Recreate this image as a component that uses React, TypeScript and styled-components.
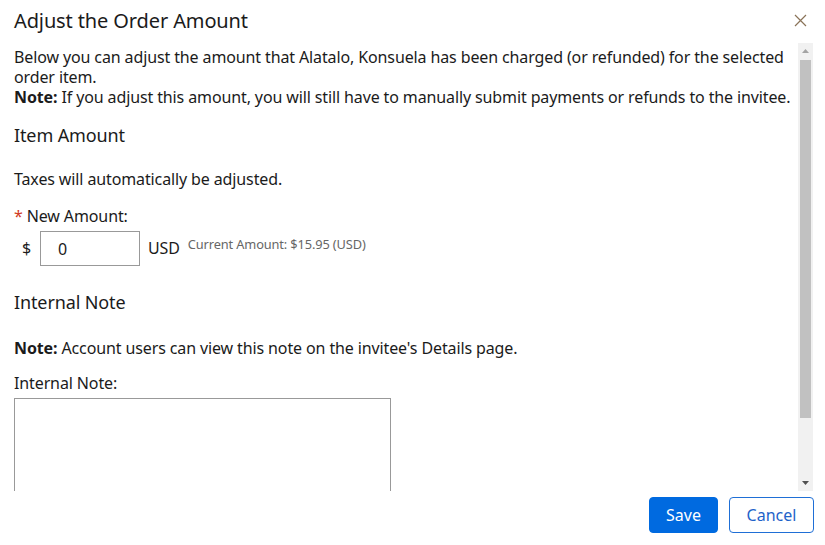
import React, { useState } from "react";
import styled, { createGlobalStyle } from "styled-components";

const GlobalStyle = createGlobalStyle`
  html, body {
    margin: 0;
    padding: 0;
    background: #ffffff;
  }
  body {
    font-family: "Noto Sans", "Liberation Sans", sans-serif;
    color: #1b1b1b;
    letter-spacing: -0.12px;
  }
  * {
    box-sizing: border-box;
  }
`;

const App = () => {
  const [amount, setAmount] = useState("0");
  const [note, setNote] = useState("");

  return (
    <Dialog>
      <GlobalStyle />
      <Header>
        <Title>Adjust the Order Amount</Title>
        <CloseButton aria-label="Close">
          <svg width="13" height="13" viewBox="0 0 13 13">
            <path d="M1 1L12 12M12 1L1 12" stroke="#8a7358" strokeWidth="1.2" fill="none" />
          </svg>
        </CloseButton>
      </Header>
      <Body>
        <Content>
          <Intro>
            Below you can adjust the amount that Alatalo, Konsuela has been charged (or refunded) for the
            selected order item.
            <br />
            <b>Note:</b> If you adjust this amount, you will still have to manually submit payments or
            refunds to the invitee.
          </Intro>
          <SectionTitle>Item Amount</SectionTitle>
          <Text>Taxes will automatically be adjusted.</Text>
          <Label $top={17}>
            <Required>*</Required> New Amount:
          </Label>
          <AmountRow>
            <Currency>$</Currency>
            <AmountInput value={amount} onChange={(e) => setAmount(e.target.value)} />
            <Unit>USD</Unit>
            <Hint>Current Amount: $15.95 (USD)</Hint>
          </AmountRow>
          <SectionTitle $top={24}>Internal Note</SectionTitle>
          <Text $top={24}>
            <b>Note:</b> Account users can view this note on the invitee's Details page.
          </Text>
          <Label>Internal Note:</Label>
          <NoteArea value={note} onChange={(e) => setNote(e.target.value)} />
        </Content>
        <ScrollTrack>
          <ScrollArrow>
            <svg width="7" height="4" viewBox="0 0 7 4">
              <path d="M3.5 0L7 4H0Z" fill="#a3a3a3" />
            </svg>
          </ScrollArrow>
          <ScrollThumb />
          <ScrollArrow $end>
            <svg width="7" height="4" viewBox="0 0 7 4">
              <path d="M0 0H7L3.5 4Z" fill="#505050" />
            </svg>
          </ScrollArrow>
        </ScrollTrack>
      </Body>
      <Footer>
        <PrimaryButton>Save</PrimaryButton>
        <SecondaryButton>Cancel</SecondaryButton>
      </Footer>
    </Dialog>
  );
};

const Dialog = styled.div`
  width: 825px;
  height: 545px;
  display: flex;
  flex-direction: column;
  background: #fff;
  overflow: hidden;
`;

const Header = styled.div`
  height: 43px;
  display: flex;
  align-items: center;
  justify-content: space-between;
  padding: 0 18px 3px 14px;
`;

const Title = styled.h1`
  margin: 0;
  font-size: 20px;
  font-weight: 400;
  color: #1b1b1b;
`;

const CloseButton = styled.button`
  border: none;
  background: none;
  padding: 0;
  display: flex;
  cursor: pointer;
`;

const Body = styled.div`
  height: 448px;
  margin-right: 12px;
  display: flex;
  font-size: 16px;
`;

const Content = styled.div`
  flex: 1;
  min-width: 0;
  overflow: hidden;
  padding: 4px 0 0 14px;
`;

const ScrollTrack = styled.div`
  width: 15px;
  flex-shrink: 0;
  display: flex;
  flex-direction: column;
  background: #f1f1f1;
`;

const ScrollArrow = styled.div<{ $end?: boolean }>`
  height: 16px;
  margin-top: ${(p) => (p.$end ? "auto" : "0")};
  display: flex;
  align-items: center;
  justify-content: center;
`;

const ScrollThumb = styled.div`
  height: 358px;
  margin: 1px 2px 0;
  background: #c1c1c1;
`;

const Intro = styled.p`
  margin: 0;
  line-height: 20px;
  padding-right: 2px;
`;

const SectionTitle = styled.h2<{ $top?: number }>`
  margin: ${(p) => p.$top ?? 16}px 0 0;
  font-size: 18px;
  font-weight: 400;
  line-height: 24px;
`;

const Text = styled.p<{ $top?: number }>`
  margin: ${(p) => p.$top ?? 22}px 0 0;
  line-height: 20px;
`;

const Label = styled.div<{ $top?: number }>`
  margin-top: ${(p) => p.$top ?? 15}px;
  line-height: 20px;
`;

const Required = styled.span`
  color: #d13b24;
`;

const AmountRow = styled.div`
  display: flex;
  align-items: flex-start;
  margin-top: 5px;
`;

const Currency = styled.span`
  width: 26px;
  padding-left: 8px;
  line-height: 35px;
`;

const AmountInput = styled.input`
  width: 100px;
  height: 35px;
  border: 1px solid #999;
  border-radius: 0;
  padding: 0 0 0 17px;
  font: inherit;
  color: #1b1b1b;
  outline: none;
`;

const Unit = styled.span`
  margin-left: 8px;
  line-height: 35px;
`;

const Hint = styled.span`
  margin: 5px 0 0 8px;
  font-size: 12.8px;
  line-height: 16px;
  color: #666;
`;

const NoteArea = styled.textarea`
  display: block;
  margin-top: 5px;
  width: 377px;
  height: 120px;
  border: 1px solid #999;
  border-radius: 0;
  resize: none;
  font: inherit;
  outline: none;
`;

const Footer = styled.div`
  flex: 1;
  display: flex;
  justify-content: flex-end;
  align-items: flex-start;
  gap: 11px;
  padding: 6px 11px 0 0;
`;

const PrimaryButton = styled.button`
  width: 69px;
  height: 36px;
  border: 1px solid #006ae0;
  border-radius: 4px;
  background: #006ae0;
  color: #fff;
  font: inherit;
  font-size: 16px;
  cursor: pointer;
`;

const SecondaryButton = styled(PrimaryButton)`
  width: 85px;
  background: #fff;
  color: #1f63c9;
  border-color: #1f6fd6;
`;

export default App;
